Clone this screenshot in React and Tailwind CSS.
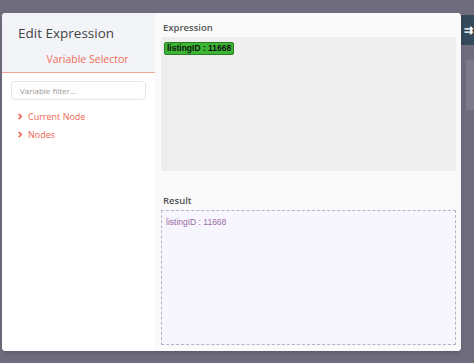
import React from "react";

const Chevron = () => (
  <svg width="6" height="7" viewBox="0 0 6 8" className="mr-[5px]">
    <path d="M1.5 1 L4.5 4 L1.5 7" stroke="#f0654f" strokeWidth="1.8" fill="none" />
  </svg>
);

const App = () => {
  const tree = ["Current Node", "Nodes"];

  return (
    <div className="w-[474px] h-[363px] bg-[#6f6c7e] relative overflow-hidden font-['Open_Sans',sans-serif]">
      {/* right edge toolbar behind modal */}
      <div className="absolute right-0 top-[15px] w-[14px] h-[30px] bg-[#34495a] flex items-center justify-end pr-[1px] text-white text-[11px] font-bold">
        ⇉
      </div>
      <div className="absolute right-0 top-[60px] w-[8px] h-[50px] bg-[#7d7a8b]" />

      {/* Modal */}
      <div className="absolute left-[2px] top-[13px] w-[459px] h-[338px] bg-white rounded-[4px] shadow-md flex overflow-hidden">
        {/* Left panel */}
        <div className="w-[153px] flex flex-col bg-white">
          <div className="bg-[#f3f4f7]">
            <div className="pl-[16px] pt-[10px] h-[38px] text-[13.5px] text-[#444] leading-[20px]">
              Edit Expression
            </div>
            <div className="h-[22px] pl-[18px] text-center text-[10.5px] font-medium text-[#f06d59] border-b border-[#f4a395] leading-[16px]">
              Variable Selector
            </div>
          </div>
          <div className="px-[9px] pt-[8px]">
            <div className="h-[19px] border border-[#e6e6e6] rounded-[3px] bg-white pl-[8px] text-[8px] text-[#999] leading-[17px]">
              Variable filter...
            </div>
          </div>
          <div className="pl-[15px] pt-[10px] flex flex-col gap-[5px]">
            {tree.map((t) => (
              <div key={t} className="flex items-center text-[9px] text-[#f0654f] leading-[13px]">
                <Chevron />
                {t}
              </div>
            ))}
          </div>
        </div>

        {/* Right panel */}
        <div className="flex-1 bg-[#fafafa] pl-[6px] pr-[5px] flex flex-col">
          <div className="pt-[6px] pl-[2px] text-[9.5px] font-semibold text-[#555] leading-[17px] h-[24px]">
            Expression
          </div>
          <div className="h-[134px] bg-[#eeeeee] pt-[5px] pl-[3px] flex items-start">
            <span className="block bg-[#3bb533] border border-[#2c7a24] rounded-[2px] px-[2px] text-[8.5px] font-bold text-[#111] leading-[11px] font-['Liberation_Sans',Arial,sans-serif]">
              listingID : 11668
            </span>
          </div>
          <div className="pt-[21px] pl-[2px] text-[9.5px] font-semibold text-[#555] leading-[17px] h-[39px]">
            Result
          </div>
          <div className="h-[135px] border border-dashed border-[#b8b0c4] bg-[#f7f5fd] pt-[5px] pl-[4px] text-[8.5px] text-[#9b6ba6] leading-[12px] font-['Liberation_Sans',Arial,sans-serif]">
            listingID : 11668
          </div>
        </div>
      </div>
    </div>
  );
};

export default App;
